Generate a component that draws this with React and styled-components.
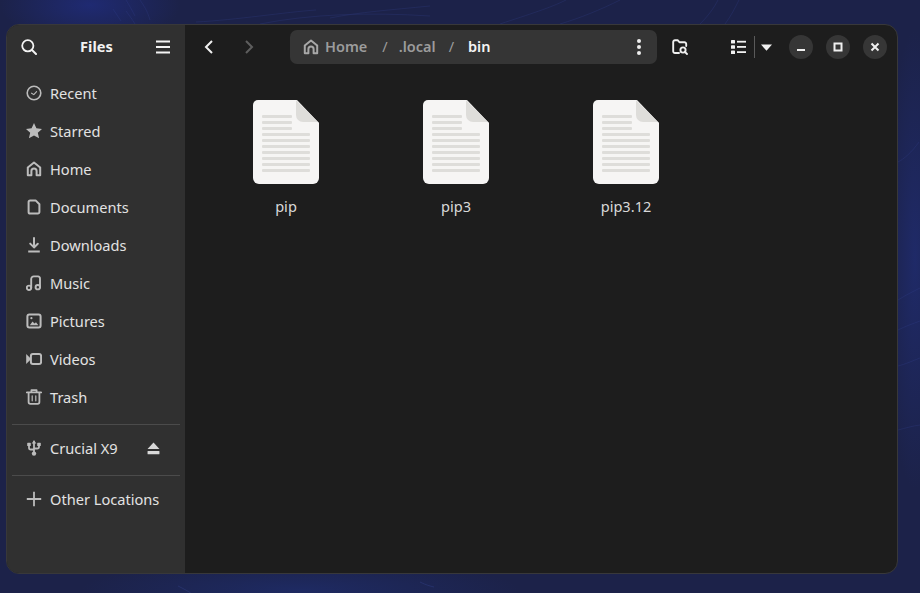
import React from "react";
import styled, { createGlobalStyle } from "styled-components";

const Global = createGlobalStyle`
  html, body { margin: 0; padding: 0; height: 100%; overflow: hidden; background: #1c2249; }
  #root { height: 593px; }
  * { box-sizing: border-box; }
`;

const Desktop = styled.div`
  position: relative;
  width: 920px;
  height: 593px;
  padding: 24px 22px 19px 6px;
  font-family: "Noto Sans", "Open Sans", sans-serif;
  background:
    radial-gradient(90px 40px at 90px 5px, #1f2a72 0%, rgba(31, 42, 114, 0) 100%),
    radial-gradient(30px 230px at 915px 260px, #1f2a68 0%, rgba(31, 42, 104, 0) 100%),
    radial-gradient(220px 30px at 300px 590px, #1e2a62 0%, rgba(30, 42, 98, 0) 100%),
    #1c2249;
  overflow: hidden;
`;

const Wallpaper = styled.svg`
  position: absolute;
  inset: 0;
  width: 920px;
  height: 593px;
`;

const Window = styled.div`
  position: relative;
  display: flex;
  height: 550px;
  border-radius: 13px;
  overflow: hidden;
  border: 1px solid #38383a;
  background: #1d1d1d;
`;

const Sidebar = styled.aside`
  width: 178px;
  flex: none;
  background: #303030;
  display: flex;
  flex-direction: column;
  color: #e4e4e4;
`;

const SideHeader = styled.header`
  height: 43px;
  display: flex;
  align-items: center;
  justify-content: space-between;
  padding: 0 14px 0 14px;
  margin-bottom: 6px;
`;

const HeaderTitle = styled.div`
  font-size: 14.6px;
  font-weight: 700;
  color: #f2f2f2;
  margin-left: 1px;
  margin-top: -1px;
`;

const SideRow = styled.div`
  height: 38px;
  display: flex;
  align-items: center;
  padding: 0 19px 0 19px;
  gap: 8px;
  font-size: 14.6px;
  color: #e2e2e2;
  svg { color: #bcbcbc; flex: none; }
`;

const RowLabel = styled.span`
  flex: 1;
  white-space: nowrap;
`;

const Rule = styled.hr`
  margin: ${(p) => p.$top}px 5px ${(p) => p.$bottom}px;
  border: none;
  height: 1px;
  background: #4b4b4b;
`;

const Main = styled.main`
  flex: 1;
  min-width: 0;
  display: flex;
  flex-direction: column;
`;

const Toolbar = styled.div`
  height: 44px;
  display: flex;
  align-items: center;
  padding-left: 4px;
  flex: none;
`;

const NavButton = styled.div`
  width: 40px;
  height: 34px;
  display: flex;
  align-items: center;
  justify-content: center;
  color: ${(p) => (p.$disabled ? "#5e5e5e" : "#f0f0f0")};
`;

const PathBar = styled.div`
  width: 367px;
  height: 34px;
  margin-left: 21px;
  border-radius: 7px;
  background: #353535;
  display: flex;
  align-items: center;
  padding-left: 13px;
  padding-right: 16px;
  font-size: 14.5px;
  font-weight: 600;
  color: #9c9c9c;
`;

const Crumb = styled.span`
  color: ${(p) => (p.$current ? "#f4f4f4" : "#9c9c9c")};
  margin-left: ${(p) => p.$ml || 0}px;
  margin-top: -2px;
`;

const Slash = styled.span`
  font-weight: 400;
  color: #9c9c9c;
  margin-left: ${(p) => p.$ml}px;
  margin-top: -2px;
`;

const PathMenu = styled.div`
  margin-left: auto;
  display: flex;
  color: #eeeeee;
`;

const ToolIcon = styled.div`
  display: flex;
  align-items: center;
  color: #f0f0f0;
  margin-left: ${(p) => p.$ml}px;
`;

const ToolDivider = styled.div`
  width: 1px;
  height: 22px;
  background: #5a5a5a;
  margin-left: 8px;
`;

const WmButton = styled.div`
  width: 24px;
  height: 24px;
  border-radius: 50%;
  background: #363636;
  display: flex;
  align-items: center;
  justify-content: center;
  color: #efefef;
  margin-left: ${(p) => p.$ml}px;
  flex: none;
`;

const FileGrid = styled.div`
  display: flex;
  padding: 31px 0 0 16px;
`;

const FileItem = styled.div`
  width: 170px;
  display: flex;
  flex-direction: column;
  align-items: center;
`;

const FileName = styled.div`
  margin-top: 11px;
  font-size: 14.6px;
  line-height: 22px;
  color: #d8d8d8;
`;

const Ico = ({ children, size = 16, box = "0 0 16 16", ...rest }) => (
  <svg width={size} height={size} viewBox={box} fill="none" stroke="currentColor" strokeWidth="2" strokeLinecap="round" strokeLinejoin="round" {...rest}>
    {children}
  </svg>
);

const HOME_PATH = "M1.8 14.2V6.6L8 1.5l6.2 5.1v7.6H10.6V10a2.6 2.6 0 0 0-5.2 0v4.2z";

const DocIcon = ({ lines }) => (
  <svg width="66" height="84" viewBox="0 0 66 84">
    <path d="M5 0H44L66 23V78a6 6 0 0 1-6 6H6a6 6 0 0 1-6-6V5a5 5 0 0 1 5-5z" fill="#f6f5f4" />
    <path d="M43 0L66 23V22H50a7 7 0 0 1-7-7z" fill="#deddda" />
    {lines.map(([y, w]) => (
      <rect key={y} x="9" y={y} width={w} height="3" rx="1" fill="#deddda" />
    ))}
  </svg>
);

const docLines = [
  [15, 30], [21, 30], [27, 30], [33, 48], [39, 48], [45, 48], [51, 48], [57, 48], [63, 48], [69, 48],
];

const rows = [
  ["Recent", <Ico strokeWidth="1.6"><circle cx="8" cy="8" r="6.8" /><path d="M5.6 8.2 7.8 9.6l2.8-3" strokeWidth="1.1" /></Ico>],
  ["Starred", <Ico><path d="M8 0l2.4 5.3 5.6.6-4.2 3.8 1.3 5.6L8 12.5l-5.1 2.8 1.3-5.6L0 5.9l5.6-.6z" fill="currentColor" stroke="none" /></Ico>],
  ["Home", <Ico><path d={HOME_PATH} /></Ico>],
  ["Documents", <Ico><path d="M2.6 3a1.6 1.6 0 0 1 1.6-1.6H9.6L13.4 5.2V13a1.6 1.6 0 0 1-1.6 1.6H4.2A1.6 1.6 0 0 1 2.6 13z" /></Ico>],
  ["Downloads", <Ico><path d="M8 1v9M4.2 6.6 8 10.4l3.8-3.6" /><path d="M2.2 14.6h11.6" strokeLinecap="butt" /></Ico>],
  ["Music", <Ico strokeWidth="1.9"><circle cx="3" cy="12.8" r="2.2" /><circle cx="11.8" cy="12.2" r="2.2" /><path d="M5.2 12.8V4a2.6 2.6 0 0 1 2.6-2.6h4.2A2 2 0 0 1 14 3.6v8.6" /></Ico>],
  ["Pictures", <Ico><rect x="1.4" y="1.4" width="13.2" height="13.2" rx="2" /><path d="M3.8 12.2 6.5 8.5 8.5 10.5 10 9.2l2.4 3z" fill="currentColor" stroke="none" /><circle cx="5.4" cy="5.2" r="1.1" fill="currentColor" stroke="none" /></Ico>],
  ["Videos", <Ico><rect x="4.9" y="3" width="10.2" height="10" rx="2" /><path d="M.2 3 4.2 7v2L.2 13z" fill="currentColor" stroke="none" /></Ico>],
  ["Trash", <Ico strokeWidth="1.8"><path d="M.8 3.4h14.4M5.4 3.2V1.2h5.2v2M2.6 4v9a1.8 1.8 0 0 0 1.8 1.8h7.2A1.8 1.8 0 0 0 13.4 13V4" /><path d="M6.2 6.8v5M9.8 6.8v5" strokeWidth="1.2" /></Ico>],
];

export default function App() {
  return (
    <>
      <Global />
      <Desktop>
        <Wallpaper viewBox="0 0 920 593" fill="none" stroke="#3a4aa0" strokeWidth="0.6" opacity="0.35">
          <path d="M126 0c3 5 6 10 9 16M140 0c4 6 7 10 10 20M113 9c3 4 5 8 8 12M126 11c3 4 6 8 9 13" />
          <path d="M196 22c40-2 90-10 120-12M260 24c50-10 110-12 170-8M330 18c30-6 60-8 100-12" />
          <path d="M620 0c-20 10-40 18-60 24M500 24c30-10 50-16 66-24M700 24c8-8 14-16 18-24M725 24c6-8 10-16 14-24" />
          <path d="M898 162c6-3 14-10 21-20M898 300c8-5 14-8 22-12M898 330c8-4 14-6 22-9M898 366c8-2 14-5 22-8M898 430c8-2 14-4 22-5" />
          <path d="M178 586c6 3 10 5 14 8M420 582c6 3 10 4 14 5" stroke="#4a5cc0" />
        </Wallpaper>
        <Window>
          <Sidebar>
            <SideHeader>
              <Ico size={16} style={{ color: "#f4f4f4" }} strokeWidth="1.8">
                <circle cx="6.8" cy="6.8" r="5.6" />
                <path d="M11 11l4 4" strokeWidth="2" />
              </Ico>
              <HeaderTitle>Files</HeaderTitle>
              <Ico size={16} style={{ color: "#f4f4f4" }} strokeWidth="1.8">
                <path d="M1 2.5h14M1 8h14M1 13.5h14" strokeLinecap="butt" />
              </Ico>
            </SideHeader>
            {rows.map(([label, icon]) => (
              <SideRow key={label}>
                {icon}
                <RowLabel>{label}</RowLabel>
              </SideRow>
            ))}
            <Rule $top={8} $bottom={4} />
            <SideRow>
              <Ico strokeWidth="1.8">
                <path d="M8 1.5v11.5M3 4.5v3.2c0 1 .8 1.8 1.8 1.8H8M13 4.5v2.2c0 1-.8 1.8-1.8 1.8H8" />
                <path d="M5.6 3.6 8 .4l2.4 3.2z" fill="currentColor" stroke="none" />
                <rect x="1.2" y="2.8" width="3.6" height="3.2" rx="0.6" fill="currentColor" stroke="none" />
                <rect x="11.2" y="2.8" width="3.6" height="3.2" rx="0.6" fill="currentColor" stroke="none" />
                <circle cx="8" cy="13.6" r="2.2" fill="currentColor" stroke="none" />
              </Ico>
              <RowLabel>Crucial X9</RowLabel>
              <Ico size={13} box="0 0 14 14" style={{ color: "#d8d8d8", marginRight: 6 }}>
                <path d="M7 .6 13.4 7.6H.6z" fill="currentColor" stroke="none" />
                <rect x="0.6" y="9.6" width="12.8" height="3.6" rx="0.6" fill="currentColor" stroke="none" />
              </Ico>
            </SideRow>
            <Rule $top={8} $bottom={4} />
            <SideRow>
              <Ico strokeWidth="1.8">
                <path d="M8 .8v14.4M.8 8h14.4" strokeLinecap="butt" />
              </Ico>
              <RowLabel>Other Locations</RowLabel>
            </SideRow>
          </Sidebar>
          <Main>
            <Toolbar>
              <NavButton>
                <Ico strokeWidth="2"><path d="M11 2 5 8l6 6" strokeLinecap="butt" strokeLinejoin="miter" /></Ico>
              </NavButton>
              <NavButton $disabled>
                <Ico strokeWidth="2"><path d="M5 2l6 6-6 6" strokeLinecap="butt" strokeLinejoin="miter" /></Ico>
              </NavButton>
              <PathBar>
                <Ico style={{ color: "#a8a8a8" }}><path d={HOME_PATH} /></Ico>
                <Crumb $ml={6}>Home</Crumb>
                <Slash $ml={15}>/</Slash>
                <Crumb $ml={11}>.local</Crumb>
                <Slash $ml={13}>/</Slash>
                <Crumb $current $ml={14}>bin</Crumb>
                <PathMenu>
                  <svg width="4" height="16" viewBox="0 0 4 16" fill="currentColor">
                    <circle cx="2" cy="2" r="2" /><circle cx="2" cy="8" r="2" /><circle cx="2" cy="14" r="2" />
                  </svg>
                </PathMenu>
              </PathBar>
              <ToolIcon $ml={15}>
                <Ico strokeWidth="1.9">
                  <path d="M7 14H3a1.8 1.8 0 0 1-1.8-1.8V3A1.8 1.8 0 0 1 3 1.2h2.6l1.8 2h5A1.8 1.8 0 0 1 14.2 5v2" />
                  <circle cx="11" cy="11" r="2.6" />
                  <path d="M13 13l2 2" strokeWidth="1.8" />
                </Ico>
              </ToolIcon>
              <ToolIcon $ml={43}>
                <svg width="15" height="14" viewBox="0 0 15 14" fill="currentColor">
                  <rect x="0" y="0" width="4" height="3.6" rx="0.6" /><rect x="0" y="5.2" width="4" height="3.6" rx="0.6" /><rect x="0" y="10.4" width="4" height="3.6" rx="0.6" />
                  <rect x="6" y="0.8" width="9" height="1.8" /><rect x="6" y="6" width="9" height="1.8" /><rect x="6" y="11.2" width="9" height="1.8" />
                </svg>
              </ToolIcon>
              <ToolDivider />
              <ToolIcon $ml={6}>
                <svg width="11" height="7" viewBox="0 0 11 7" fill="currentColor"><path d="M0 .5h11L5.5 6.8z" /></svg>
              </ToolIcon>
              <WmButton $ml={17}>
                <svg width="10" height="10" viewBox="0 0 10 10" fill="currentColor"><rect x="1" y="7" width="8" height="2" /></svg>
              </WmButton>
              <WmButton $ml={13}>
                <svg width="10" height="10" viewBox="0 0 10 10" fill="none" stroke="currentColor" strokeWidth="2"><rect x="1.5" y="1.5" width="7" height="7" /></svg>
              </WmButton>
              <WmButton $ml={13}>
                <svg width="10" height="10" viewBox="0 0 10 10" fill="none" stroke="currentColor" strokeWidth="2"><path d="M1.5 1.5l7 7M8.5 1.5l-7 7" /></svg>
              </WmButton>
            </Toolbar>
            <FileGrid>
              {["pip", "pip3", "pip3.12"].map((name) => (
                <FileItem key={name}>
                  <DocIcon lines={docLines} />
                  <FileName>{name}</FileName>
                </FileItem>
              ))}
            </FileGrid>
          </Main>
        </Window>
      </Desktop>
    </>
  );
}
